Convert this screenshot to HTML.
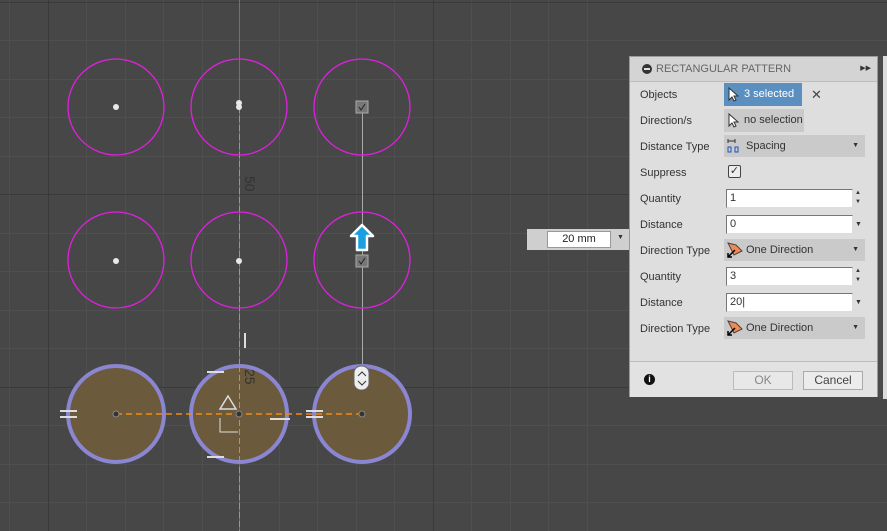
<!DOCTYPE html>
<html><head><meta charset="utf-8"><style>
body{margin:0;width:887px;height:531px;overflow:hidden;background:#474747;font-family:"Liberation Sans",sans-serif;position:relative}
.abs{position:absolute}
.dlg{position:absolute;left:629px;top:56px;width:249px;height:341px;background:#dedede;border:1px solid #9a9a9a;box-sizing:border-box}
.hdr{height:24px;background:#d4d4d4;border-bottom:1px solid #bdbdbd;font-size:11px;color:#666;line-height:24px;padding-left:26px;position:relative}
.lbl{position:absolute;left:10px;font-size:11px;color:#333}
.ctl{position:absolute;left:94px;font-size:11px;color:#333}
.sel{background:#cacaca;height:22px;width:141px;line-height:22px}
.inp{background:#fff;border:1px solid #777;border-right-color:#ddd;border-bottom-color:#ddd;height:17px;width:122px;line-height:17px;padding-left:3px;box-sizing:content-box}
.arr{position:absolute;font-size:6px;line-height:9px;color:#333}
</style></head><body>
<svg class="abs" style="left:0;top:0" width="887" height="531">
<g stroke="#4f4f4f" stroke-width="1">
<line x1="9.5" y1="0" x2="9.5" y2="531"/><line x1="86.5" y1="0" x2="86.5" y2="531"/><line x1="125.5" y1="0" x2="125.5" y2="531"/><line x1="163.5" y1="0" x2="163.5" y2="531"/><line x1="202.5" y1="0" x2="202.5" y2="531"/><line x1="279.5" y1="0" x2="279.5" y2="531"/><line x1="317.5" y1="0" x2="317.5" y2="531"/><line x1="356.5" y1="0" x2="356.5" y2="531"/><line x1="394.5" y1="0" x2="394.5" y2="531"/><line x1="471.5" y1="0" x2="471.5" y2="531"/><line x1="510.5" y1="0" x2="510.5" y2="531"/><line x1="548.5" y1="0" x2="548.5" y2="531"/><line x1="587.5" y1="0" x2="587.5" y2="531"/>
<line x1="0" y1="40.5" x2="887" y2="40.5"/><line x1="0" y1="79.5" x2="887" y2="79.5"/><line x1="0" y1="117.5" x2="887" y2="117.5"/><line x1="0" y1="156.5" x2="887" y2="156.5"/><line x1="0" y1="233.5" x2="887" y2="233.5"/><line x1="0" y1="271.5" x2="887" y2="271.5"/><line x1="0" y1="310.5" x2="887" y2="310.5"/><line x1="0" y1="348.5" x2="887" y2="348.5"/><line x1="0" y1="425.5" x2="887" y2="425.5"/><line x1="0" y1="464.5" x2="887" y2="464.5"/><line x1="0" y1="502.5" x2="887" y2="502.5"/>
</g>
<g stroke="#3a3a3a" stroke-width="1">
<line x1="48.5" y1="0" x2="48.5" y2="531"/><line x1="433.5" y1="0" x2="433.5" y2="531"/><line x1="0" y1="2.5" x2="887" y2="2.5"/><line x1="0" y1="194.5" x2="887" y2="194.5"/><line x1="0" y1="387.5" x2="887" y2="387.5"/>
</g>
<line x1="239.5" y1="0" x2="239.5" y2="107" stroke="#3a9a3a"/>
<line x1="239.5" y1="107" x2="239.5" y2="531" stroke="#3a9a3a"/>
<line x1="239.5" y1="107" x2="239.5" y2="531" stroke="#e08a20" stroke-dasharray="6 3"/>
<line x1="362.5" y1="107" x2="362.5" y2="414" stroke="#aaa"/>
<g fill="none" stroke="#e020e0" stroke-width="1.3">
<circle cx="116" cy="107" r="48"/><circle cx="239" cy="107" r="48"/><circle cx="362" cy="107" r="48"/>
<circle cx="116" cy="260" r="48"/><circle cx="239" cy="260" r="48"/><circle cx="362" cy="260" r="48"/>
</g>
<g fill="#6b5a3c" stroke="#8a86d2" stroke-width="4">
<circle cx="116" cy="414" r="48"/><circle cx="239" cy="414" r="48"/><circle cx="362" cy="414" r="48"/>
</g>
<line x1="239.5" y1="366" x2="239.5" y2="462" stroke="#e08a20" stroke-dasharray="6 3"/>
<line x1="116" y1="414" x2="362" y2="414" stroke="#f08a10" stroke-width="1.5" stroke-dasharray="6 4"/>
<g fill="#e8e8e8"><circle cx="116" cy="107" r="3"/><circle cx="239" cy="103" r="3"/><circle cx="239" cy="107" r="3"/><circle cx="116" cy="261" r="3"/><circle cx="239" cy="261" r="3"/></g>
<g fill="#333" stroke="#888"><circle cx="116" cy="414" r="3"/><circle cx="239" cy="414" r="3"/><circle cx="362" cy="414" r="3"/></g>
<rect x="356" y="101" width="12" height="12" fill="#777" stroke="#aaa"/><path d="M359 107l2 3 4-6" stroke="#222" fill="none"/>
<rect x="356" y="255" width="12" height="12" fill="#777" stroke="#aaa"/><path d="M359 261l2 3 4-6" stroke="#222" fill="none"/>
<path d="M362 225l-11 11h6v14h10v-14h6z" fill="#1aa0e0" stroke="#fff" stroke-width="2.5" stroke-linejoin="round"/>
<rect x="354" y="366" width="15" height="24" rx="7" fill="#eee" stroke="#666"/>
<path d="M358 376l4-4 4 4M358 381l4 4 4-4" stroke="#333" fill="none"/>
<text x="0" y="0" transform="translate(245 176) rotate(90)" font-size="14" fill="#333" font-family="Liberation Sans">50</text>
<text x="0" y="0" transform="translate(245 369) rotate(90)" font-size="14" fill="#333" font-family="Liberation Sans">25</text>
<g stroke="#ddd" stroke-width="2"><line x1="60" y1="411" x2="77" y2="411"/><line x1="60" y1="417" x2="77" y2="417"/><line x1="306" y1="411" x2="323" y2="411"/><line x1="306" y1="417" x2="323" y2="417"/><line x1="207" y1="372" x2="224" y2="372"/><line x1="207" y1="457" x2="224" y2="457"/><line x1="270" y1="419" x2="290" y2="419"/><line x1="245" y1="333" x2="245" y2="348"/></g>
<path d="M228 396l-8 13h16z" fill="none" stroke="#ddd" stroke-width="1.5"/>
<path d="M220 418v14h18" fill="none" stroke="#ddd"/>
</svg>
<div class="abs" style="left:527px;top:229px;width:102px;height:21px;background:#cfcfcf"></div>
<div class="abs" style="left:547px;top:231px;width:62px;height:15px;background:#fff;border:1px solid #999;font-size:11px;text-align:center;line-height:15px;color:#222">20 mm</div>
<div class="abs" style="left:617px;top:234px;font-size:7px;color:#333">▼</div>
<div class="abs" style="left:878px;top:56px;width:5px;height:343px;background:#4a4a4a"></div>
<div class="abs" style="left:883px;top:56px;width:4px;height:343px;background:#dcdcdc"></div>
<div class="dlg">
<div class="hdr"><span style="position:absolute;left:12px;top:7px;width:10px;height:10px;border-radius:50%;background:#333"></span><span style="position:absolute;left:14px;top:11px;width:6px;height:2px;background:#ddd"></span>RECTANGULAR PATTERN<span style="position:absolute;right:6px;font-size:7px;color:#333">▶▶</span></div>
<div class="lbl" style="top:32px">Objects</div>
<div class="ctl" style="top:26px;width:78px;height:23px;background:#5b8fbf;color:#fff;line-height:23px;padding-left:20px;box-sizing:border-box">3 selected</div>
<div class="ctl" style="top:30px;left:181px;font-size:13px;color:#444">✕</div>
<div class="lbl" style="top:58px">Direction/s</div>
<div class="ctl" style="top:52px;width:80px;height:23px;background:#cacaca;line-height:23px;padding-left:20px;box-sizing:border-box">no selection</div>
<div class="lbl" style="top:84px">Distance Type</div>
<div class="ctl sel" style="top:78px;padding-left:22px;box-sizing:border-box">Spacing<span style="position:absolute;right:6px;font-size:7px">▼</span></div>
<div class="lbl" style="top:110px">Suppress</div>
<div class="ctl" style="top:108px;left:98px;width:11px;height:11px;border:1px solid #444;border-radius:2px;background:#eee;font-size:11px;line-height:11px;text-align:center">✓</div>
<div class="lbl" style="top:136px">Quantity</div>
<div class="ctl inp" style="top:132px;left:96px">1</div>
<div class="arr" style="left:225px;top:132px">▲<br>▼</div>
<div class="lbl" style="top:162px">Distance</div>
<div class="ctl inp" style="top:158px;left:96px">0</div>
<div class="arr" style="left:225px;top:163px;font-size:7px">▼</div>
<div class="lbl" style="top:188px">Direction Type</div>
<div class="ctl sel" style="top:182px;padding-left:22px;box-sizing:border-box">One Direction<span style="position:absolute;right:6px;font-size:7px">▼</span></div>
<div class="lbl" style="top:214px">Quantity</div>
<div class="ctl inp" style="top:210px;left:96px">3</div>
<div class="arr" style="left:225px;top:210px">▲<br>▼</div>
<div class="lbl" style="top:240px">Distance</div>
<div class="ctl inp" style="top:236px;left:96px">20|</div>
<div class="arr" style="left:225px;top:241px;font-size:7px">▼</div>
<div class="lbl" style="top:266px">Direction Type</div>
<div class="ctl sel" style="top:260px;padding-left:22px;box-sizing:border-box">One Direction<span style="position:absolute;right:6px;font-size:7px">▼</span></div>
<svg class="abs" style="left:96px;top:30px" width="16" height="16"><path d="M3 1v12l3-3 2 4 2-1-2-4h4z" fill="#fff" stroke="#333"/></svg>
<svg class="abs" style="left:96px;top:56px" width="16" height="16"><path d="M3 1v12l3-3 2 4 2-1-2-4h4z" fill="#fff" stroke="#333"/></svg>
<svg class="abs" style="left:97px;top:81px" width="16" height="16"><path d="M1 1v4M8 1v4M1 3h7" stroke="#333"/><rect x="1" y="9" width="3" height="5" fill="none" stroke="#2050c0"/><rect x="8" y="9" width="3" height="5" fill="none" stroke="#2050c0"/></svg>
<svg class="abs" style="left:96px;top:184px" width="18" height="18"><path d="M2 2l8 2 6 6-8 4z" fill="#f08a50" stroke="#444"/><path d="M9 9l-7 7M2 12v4h4" stroke="#000" stroke-width="1.5" fill="none"/></svg>
<svg class="abs" style="left:96px;top:262px" width="18" height="18"><path d="M2 2l8 2 6 6-8 4z" fill="#f08a50" stroke="#444"/><path d="M9 9l-7 7M2 12v4h4" stroke="#000" stroke-width="1.5" fill="none"/></svg>
<div class="abs" style="left:0;top:304px;width:247px;height:35px;background:#e2e2e2;border-top:1px solid #bbb"></div>
<div class="abs" style="left:14px;top:317px;width:11px;height:11px;border-radius:50%;background:#111;color:#fff;font-size:9px;font-weight:bold;text-align:center;line-height:11px">i</div>
<div class="abs" style="left:103px;top:314px;width:58px;height:17px;border:1px solid #bbb;background:#e8e8e8;font-size:12px;color:#888;text-align:center;line-height:17px">OK</div>
<div class="abs" style="left:173px;top:314px;width:58px;height:17px;border:1px solid #aaa;background:#ececec;font-size:12px;color:#444;text-align:center;line-height:17px">Cancel</div>
</div>
</body></html>
